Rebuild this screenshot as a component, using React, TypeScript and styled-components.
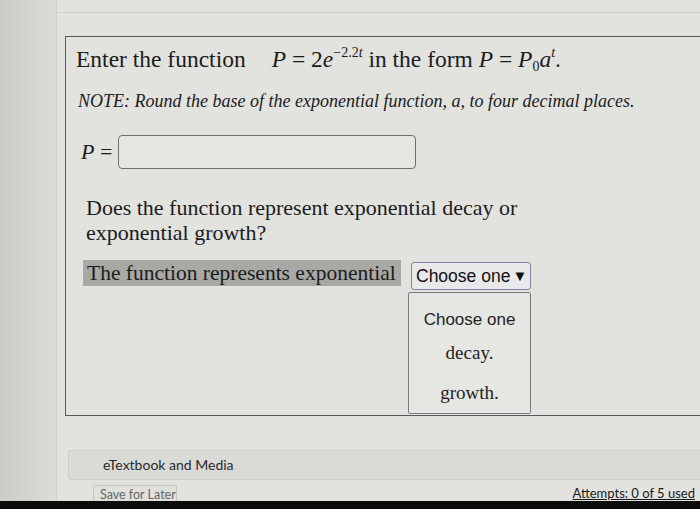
import React from 'react';
import styled, { createGlobalStyle } from 'styled-components';

const GlobalStyle = createGlobalStyle`
  html, body {
    margin: 0;
    padding: 0;
    background: #e2e2df;
  }
  body {
    width: 700px;
    height: 509px;
    overflow: hidden;
  }
`;

const serif = `'Liberation Serif', 'DejaVu Serif', serif`;
const sans = `'Liberation Sans', Arial, sans-serif`;
const lato = `Lato, 'Open Sans', sans-serif`;

export default function App() {
  return (
    <>
      <GlobalStyle />
      <Page>
        <Gutter />
        <Main>
          <TopRule />
          <QuestionBox>
            <Prompt>
              Enter the function
              <MathSpan>
                <I>P</I> = 2<I>e</I>
                <Sup>−2.2<I>t</I></Sup>
              </MathSpan>{' '}
              in the form <I>P</I> = <I>P</I>
              <Sub>0</Sub>
              <I>a</I>
              <Sup>
                <I>t</I>
              </Sup>
              .
            </Prompt>
            <Note>
              NOTE: Round the base of the exponential function, a, to four decimal places.
            </Note>
            <AnswerRow>
              <I>P</I>&nbsp;=
              <AnswerInput />
            </AnswerRow>
            <Question>
              Does the function represent exponential decay or
              <br />
              exponential growth?
            </Question>
            <ChoiceRow>
              <Highlight>The function represents exponential</Highlight>
              <SelectWrap>
                <SelectBox>
                  Choose one<Caret>▼</Caret>
                </SelectBox>
                <Options>
                  <Option $sans $gap={0}>
                    Choose one
                  </Option>
                  <Option $gap={8}>decay.</Option>
                  <Option $gap={13}>growth.</Option>
                </Options>
              </SelectWrap>
            </ChoiceRow>
          </QuestionBox>
          <MediaBar>eTextbook and Media</MediaBar>
          <Footer>
            <SaveButton>Save for Later</SaveButton>
            <Attempts>Attempts: 0 of 5 used</Attempts>
          </Footer>
        </Main>
      </Page>
      <BlackEdge />
    </>
  );
}

const Page = styled.div`
  display: flex;
  height: 501px;
  overflow: hidden;
`;

const Gutter = styled.div`
  width: 56px;
  flex-shrink: 0;
  background: linear-gradient(90deg, #cbcbc8 0%, #d8d8d5 75%, #dcdcd9 100%);
  border-right: 1px solid #d0d0cd;
`;

const Main = styled.div`
  flex: 1;
  display: flex;
  flex-direction: column;

  & > * {
    flex-shrink: 0;
  }
`;

const TopRule = styled.div`
  height: 12px;
  border-bottom: 1px solid #cfcfcc;
  margin-bottom: 23px;
`;

const QuestionBox = styled.div`
  margin-left: 8px;
  margin-right: -4px;
  height: 380px;
  box-sizing: border-box;
  border: 1px solid #5a5a58;
  border-right: none;
  padding: 7px 0 0 10px;
  color: #1c1c1c;
  font-family: ${serif};
`;

const Prompt = styled.div`
  font-size: 23.5px;
  line-height: 30px;
`;

const MathSpan = styled.span`
  margin-left: 26px;
`;

const I = styled.i`
  font-style: italic;
`;

const Sup = styled.sup`
  font-size: 14px;
  vertical-align: 10px;
  line-height: 0;
`;

const Sub = styled.sub`
  font-size: 14px;
  vertical-align: -4px;
  line-height: 0;
`;

const Note = styled.div`
  margin-top: 16px;
  margin-left: 2px;
  font-size: 18px;
  font-style: italic;
  line-height: 22px;
`;

const AnswerRow = styled.div`
  display: flex;
  align-items: center;
  margin-top: 23px;
  margin-left: 5px;
  font-size: 22px;
`;

const AnswerInput = styled.div`
  width: 298px;
  height: 34px;
  box-sizing: border-box;
  margin-left: 6px;
  border: 1.5px solid #6f6f6d;
  border-radius: 4px;
  background: #e5e5e2;
`;

const Question = styled.div`
  margin-top: 26px;
  margin-left: 10px;
  font-size: 22px;
  line-height: 25px;
`;

const ChoiceRow = styled.div`
  display: flex;
  align-items: flex-start;
  margin-top: 15px;
  margin-left: 7px;
`;

const Highlight = styled.div`
  background: #a8a8a5;
  font-size: 21.5px;
  line-height: 26px;
  padding: 0 0 0 4px;
  width: 314px;
  white-space: nowrap;
`;

const SelectWrap = styled.div`
  margin-left: 10px;
  margin-top: 2px;
  display: flex;
  flex-direction: column;
`;

const SelectBox = styled.div`
  width: 120px;
  height: 28px;
  box-sizing: border-box;
  border: 1.5px solid #7e80a8;
  border-radius: 3px;
  background: #e9e9ec;
  font-family: ${sans};
  font-size: 17.5px;
  line-height: 25px;
  padding-left: 4px;
  color: #111;
  white-space: nowrap;
`;

const Caret = styled.span`
  font-size: 15px;
  margin-left: 2px;
  vertical-align: 1px;
`;

const Options = styled.div`
  margin-top: 2px;
  margin-left: -3px;
  width: 123px;
  height: 122px;
  box-sizing: border-box;
  border: 1px solid #7c7c7a;
  border-radius: 2px;
  background: #e6e6e3;
  padding-top: 16px;
  display: flex;
  flex-direction: column;
  align-items: center;
`;

const Option = styled.div<{ $sans?: boolean; $gap: number }>`
  margin-top: ${(p) => p.$gap}px;
  font-family: ${(p) => (p.$sans ? sans : serif)};
  font-size: ${(p) => (p.$sans ? '17px' : '19px')};
  line-height: ${(p) => (p.$sans ? '22px' : '27px')};
  color: #222;
`;

const MediaBar = styled.div`
  margin: 34px 0 0 11px;
  height: 30px;
  box-sizing: border-box;
  border: 1px solid #cdcdca;
  border-right: none;
  border-radius: 3px 0 0 3px;
  background: #dadad7;
  font-family: ${lato};
  font-size: 14px;
  line-height: 28px;
  padding-left: 34px;
  color: #2a2a2a;
`;

const Footer = styled.div`
  display: flex;
  justify-content: space-between;
  align-items: flex-start;
  margin-top: 5px;
  padding-left: 36px;
  padding-right: 5px;
`;

const SaveButton = styled.div`
  width: 84px;
  height: 19px;
  box-sizing: border-box;
  border: 1px solid #c4c4c1;
  border-bottom: none;
  border-radius: 3px 3px 0 0;
  background: #e0e0dd;
  font-family: ${lato};
  font-size: 12.5px;
  line-height: 14px;
  color: #666;
  padding: 2px 0 0 6px;
  white-space: nowrap;
`;

const Attempts = styled.div`
  font-family: ${lato};
  font-size: 13px;
  line-height: 14px;
  color: #1a1a1a;
  text-decoration: underline;
  margin-top: 1px;
  white-space: nowrap;
`;

const BlackEdge = styled.div`
  height: 8px;
  background: #0b0b0b;
`;
